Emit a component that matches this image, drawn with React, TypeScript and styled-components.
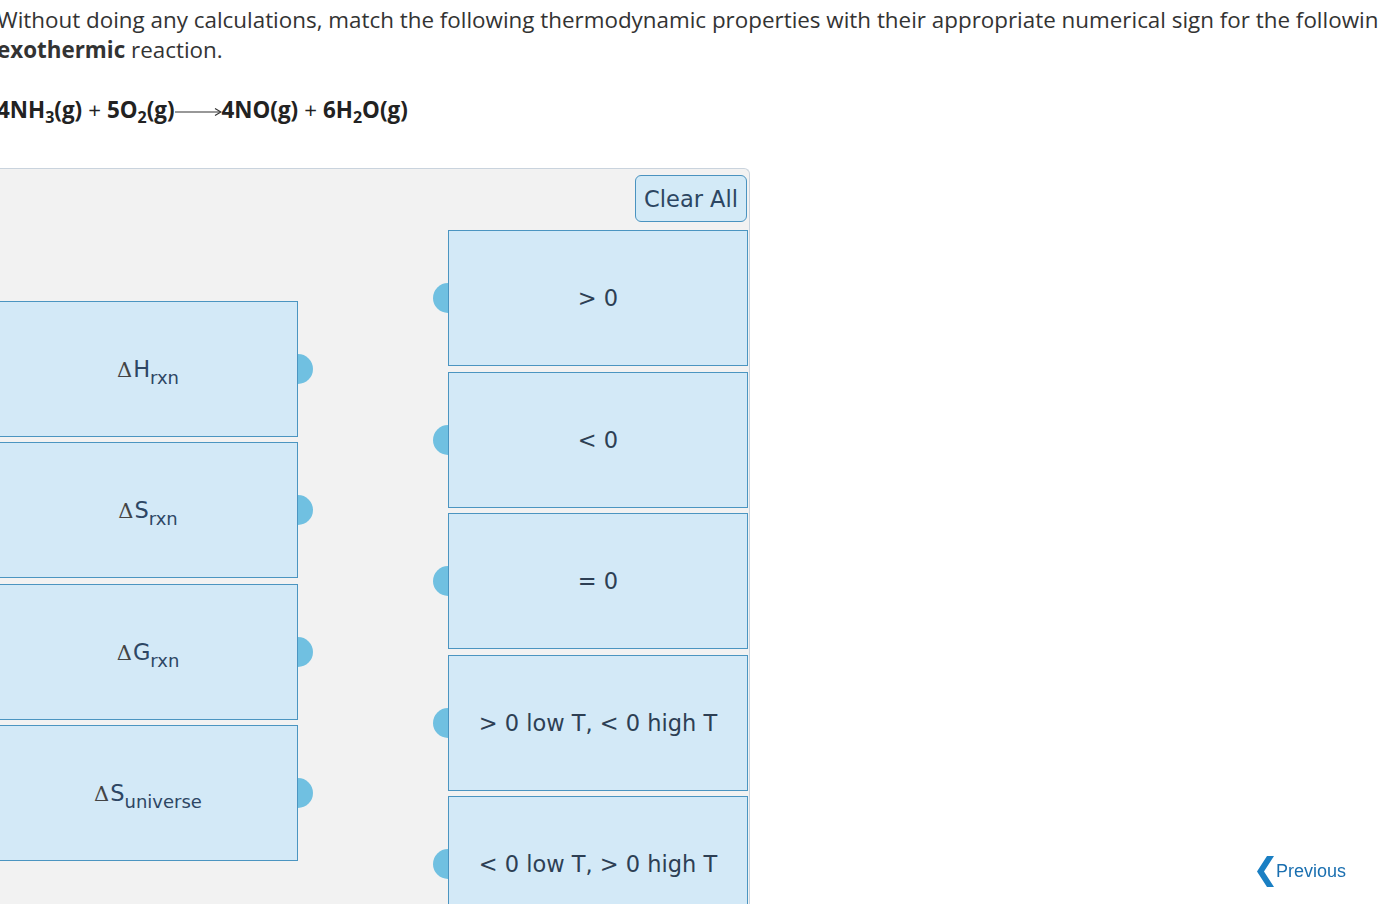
import styled, { createGlobalStyle } from 'styled-components';

const GlobalStyle = createGlobalStyle`
  html, body {
    margin: 0;
    padding: 0;
    background: #ffffff;
    overflow: hidden;
  }
  body {
    font-family: "Open Sans", "Noto Sans", sans-serif;
    color: #333333;
  }
`;

const Page = styled.div`
  margin-left: -3px;
  padding-top: 5px;
  width: 1440px;
`;

const Prompt = styled.p`
  margin: 0;
  font-size: 22.4px;
  line-height: 30px;
  color: #333333;
  white-space: nowrap;
`;

const Equation = styled.div`
  margin-top: 30px;
  font-size: 22.4px;
  line-height: 30px;
  font-weight: 700;
  color: #222222;
  white-space: nowrap;
`;

const Plus = styled.span`
  font-weight: 400;
  margin: 0 6px;
`;

const Sub = styled.sub`
  font-size: 16px;
  line-height: 0;
  vertical-align: -5px;
`;

const Arrow = styled.svg`
  width: 47px;
  height: 12px;
  vertical-align: middle;
`;

const Panel = styled.section`
  position: relative;
  z-index: 0;
  margin-top: 43px;
  width: 752px;
  background: #f2f2f2;
  border-top: 1px solid #c9d3dd;
  border-right: 1px solid #c9d3dd;
  border-radius: 0 6px 0 0;
  padding-bottom: 40px;
`;

const Toolbar = styled.div`
  display: flex;
  justify-content: flex-end;
  padding: 6px 2px 0 0;
`;

const ClearButton = styled.button`
  height: 47px;
  padding: 0 8px;
  background: #d3eaf7;
  border: 1px solid #4a93c0;
  border-radius: 6px;
  font-family: "DejaVu Sans", Verdana, sans-serif;
  font-size: 22.5px;
  color: #2c4662;
  cursor: pointer;
`;

const Board = styled.div`
  display: flex;
  align-items: center;
  justify-content: space-between;
  margin-top: 8px;
  padding: 0 1px 0 1px;
`;

const Column = styled.div`
  display: flex;
  flex-direction: column;
  gap: 5.5px;
`;

const Card = styled.div<{ $side: 'left' | 'right' }>`
  position: relative;
  box-sizing: border-box;
  width: 300px;
  height: 136px;
  background: #d3e9f7;
  border: 1px solid #4b95c1;
  display: flex;
  align-items: center;
  justify-content: center;
  font-family: "DejaVu Sans", Verdana, sans-serif;
  font-size: 22.5px;
  color: #2d3f54;

  &::before {
    content: '';
    position: absolute;
    top: 50%;
    width: 15px;
    height: 30px;
    margin-top: -15px;
    background: #70c0e1;
    ${(p) =>
      p.$side === 'right'
        ? 'left: -16px; border-radius: 15px 0 0 15px;'
        : 'right: -16px; border-radius: 0 15px 15px 0;'}
  }
`;

const Label = styled.span`
  white-space: nowrap;
  color: #2d4664;
`;

const Delta = styled.span`
  font-family: "DejaVu Serif", "Liberation Serif", serif;
  font-size: 21px;
  color: #444444;
  margin-right: 1px;
`;

const SymSub = styled.sub`
  font-size: 18px;
  line-height: 0;
  vertical-align: -7px;
`;

const PrevButton = styled.a`
  position: fixed;
  right: 32px;
  bottom: 17px;
  display: flex;
  align-items: center;
  gap: 2px;
  font-family: "Liberation Sans", Arial, sans-serif;
  font-size: 18px;
  color: #1a6fb0;
  text-decoration: none;
  cursor: pointer;
`;

const Chevron = styled.svg`
  width: 17px;
  height: 31px;
`;

const properties = [
  { sym: 'H', sub: 'rxn' },
  { sym: 'S', sub: 'rxn' },
  { sym: 'G', sub: 'rxn' },
  { sym: 'S', sub: 'universe' },
];

const signs = ['> 0', '< 0', '= 0', '> 0 low T, < 0 high T', '< 0 low T, > 0 high T'];

const App = () => {
  return (
    <>
      <GlobalStyle />
      <Page>
        <Prompt>
          Without doing any calculations, match the following thermodynamic properties with their
          appropriate numerical sign for the following
          <br />
          <b>exothermic</b> reaction.
        </Prompt>
        <Equation>
          4NH<Sub>3</Sub>(g)<Plus>+</Plus>5O<Sub>2</Sub>(g)
          <Arrow viewBox="0 0 47 12">
            <line x1="0" y1="6" x2="45" y2="6" stroke="#333" strokeWidth="1.2" />
            <path d="M40 2.5 L46 6 L40 9.5" fill="none" stroke="#333" strokeWidth="1.2" />
          </Arrow>
          4NO(g)<Plus>+</Plus>6H<Sub>2</Sub>O(g)
        </Equation>
        <Panel>
          <Toolbar>
            <ClearButton>Clear All</ClearButton>
          </Toolbar>
          <Board>
            <Column>
              {properties.map((p, i) => (
                <Card key={i} $side="left">
                  <Label>
                    <Delta>Δ</Delta>
                    {p.sym}
                    <SymSub>{p.sub}</SymSub>
                  </Label>
                </Card>
              ))}
            </Column>
            <Column>
              {signs.map((s) => (
                <Card key={s} $side="right">
                  {s}
                </Card>
              ))}
            </Column>
          </Board>
        </Panel>
      </Page>
      <PrevButton>
        <Chevron viewBox="0 0 17 31">
          <polygon points="10,0 17,0 7,15.5 17,31 10,31 0,15.5" fill="#1a7fc3" />
        </Chevron>
        Previous
      </PrevButton>
    </>
  );
};

export default App;
